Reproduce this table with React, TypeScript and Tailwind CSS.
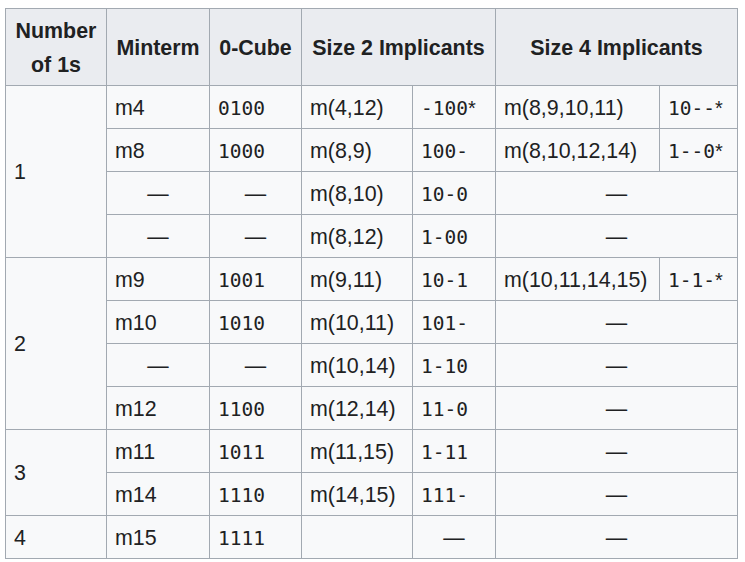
import React from 'react';

type Row = {
  ones?: { label: string; span: number };
  minterm: string;
  cube: string;
  pair?: string;
  pairCode: string;
  pairStar?: boolean;
  quad?: string;
  quadCode?: string;
};

const rows: Row[] = [
  { ones: { label: '1', span: 4 }, minterm: 'm4', cube: '0100', pair: 'm(4,12)', pairCode: '-100', pairStar: true, quad: 'm(8,9,10,11)', quadCode: '10--' },
  { minterm: 'm8', cube: '1000', pair: 'm(8,9)', pairCode: '100-', quad: 'm(8,10,12,14)', quadCode: '1--0' },
  { minterm: '—', cube: '—', pair: 'm(8,10)', pairCode: '10-0' },
  { minterm: '—', cube: '—', pair: 'm(8,12)', pairCode: '1-00' },
  { ones: { label: '2', span: 4 }, minterm: 'm9', cube: '1001', pair: 'm(9,11)', pairCode: '10-1', quad: 'm(10,11,14,15)', quadCode: '1-1-' },
  { minterm: 'm10', cube: '1010', pair: 'm(10,11)', pairCode: '101-' },
  { minterm: '—', cube: '—', pair: 'm(10,14)', pairCode: '1-10' },
  { minterm: 'm12', cube: '1100', pair: 'm(12,14)', pairCode: '11-0' },
  { ones: { label: '3', span: 2 }, minterm: 'm11', cube: '1011', pair: 'm(11,15)', pairCode: '1-11' },
  { minterm: 'm14', cube: '1110', pair: 'm(14,15)', pairCode: '111-' },
  { ones: { label: '4', span: 1 }, minterm: 'm15', cube: '1111', pairCode: '—' },
];

const cell = 'border border-[#a2a9b1] px-[8px] pt-[2px] pb-0 align-middle';
const mono = "font-['DejaVu_Sans_Mono',monospace] text-[19.5px]";

const Star = () => <span className="font-['Liberation_Sans',Arial,sans-serif] text-[20px]">*</span>;

const Dash = () => <span>—</span>;

export default function App() {
  return (
    <div className="bg-white min-h-[562px] pt-[8px] pl-[5px]">
      <table
        className="border-collapse table-fixed w-[732px] bg-[#f8f9fa] text-[#202122] text-[21.4px] leading-[1.6] font-['Liberation_Sans',Arial,sans-serif]"
      >
        <colgroup>
          <col className="w-[101px]" />
          <col className="w-[103px]" />
          <col className="w-[92px]" />
          <col className="w-[111px]" />
          <col className="w-[83px]" />
          <col className="w-[164px]" />
          <col className="w-[78px]" />
        </colgroup>
        <thead>
          <tr className="h-[77px] bg-[#eaecf0]">
            <th className={`${cell} text-center font-bold`}>Number<br />of 1s</th>
            <th className={`${cell} text-center font-bold`}>Minterm</th>
            <th className={`${cell} text-center font-bold`}>0-Cube</th>
            <th colSpan={2} className={`${cell} text-center font-bold`}>Size 2 Implicants</th>
            <th colSpan={2} className={`${cell} text-center font-bold`}>Size 4 Implicants</th>
          </tr>
        </thead>
        <tbody>
          {rows.map((r, i) => (
            <tr key={i} className="h-[43px]">
              {r.ones && (
                <td rowSpan={r.ones.span} className={cell}>{r.ones.label}</td>
              )}
              {r.minterm === '—' ? (
                <td className={`${cell} text-center`}><Dash /></td>
              ) : (
                <td className={cell}>{r.minterm}</td>
              )}
              {r.cube === '—' ? (
                <td className={`${cell} text-center`}><Dash /></td>
              ) : (
                <td className={cell}><code className={mono}>{r.cube}</code></td>
              )}
              <td className={cell}>{r.pair ?? ''}</td>
              {r.pairCode === '—' ? (
                <td className={`${cell} text-center`}><Dash /></td>
              ) : (
                <td className={cell}>
                  <code className={mono}>{r.pairCode}</code>
                  {r.pairStar && <Star />}
                </td>
              )}
              {r.quad ? (
                <>
                  <td className={cell}>{r.quad}</td>
                  <td className={cell}>
                    <code className={mono}>{r.quadCode}</code>
                    <Star />
                  </td>
                </>
              ) : (
                <td colSpan={2} className={`${cell} text-center`}><Dash /></td>
              )}
            </tr>
          ))}
        </tbody>
      </table>
    </div>
  );
}
